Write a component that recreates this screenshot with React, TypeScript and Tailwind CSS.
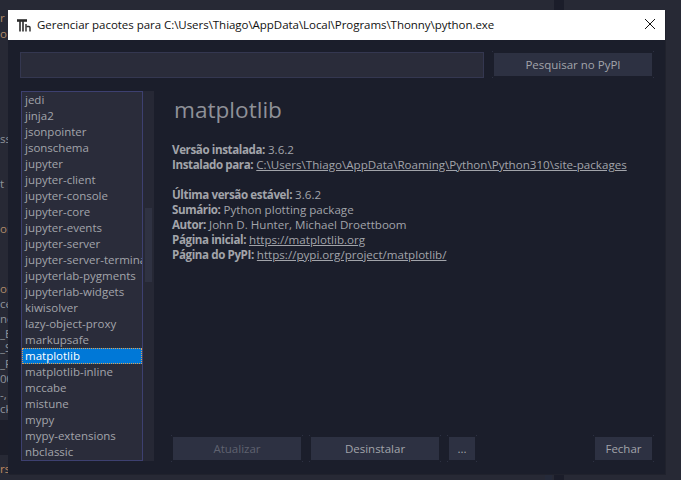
const packages = [
  'jedi',
  'jinja2',
  'jsonpointer',
  'jsonschema',
  'jupyter',
  'jupyter-client',
  'jupyter-console',
  'jupyter-core',
  'jupyter-events',
  'jupyter-server',
  'jupyter-server-terminals',
  'jupyterlab-pygments',
  'jupyterlab-widgets',
  'kiwisolver',
  'lazy-object-proxy',
  'markupsafe',
  'matplotlib',
  'matplotlib-inline',
  'mccabe',
  'mistune',
  'mypy',
  'mypy-extensions',
  'nbclassic',
];

// bits of the code editor that stick out left of the dialog
const editorFragments: [number, string, string][] = [
  [11, 'r', 'text-[#b08a68]'],
  [27, 'o', 'text-[#b08a68]'],
  [132, 'ss', 'text-[#8f939a]'],
  [177, 't', 'text-[#8f939a]'],
  [222, 'or', 'text-[#b08a68]'],
  [282, 'or', 'text-[#b08a68]'],
  [297, 'ce', 'text-[#8f939a]'],
  [312, 'no', 'text-[#8f939a]'],
  [327, '_E', 'text-[#8f939a]'],
  [341, '_S', 'text-[#8f939a]'],
  [357, '_F', 'text-[#8f939a]'],
  [372, '00', 'text-[#8f939a]'],
  [388, '-,', 'text-[#8f939a]'],
  [402, 'ck', 'text-[#8f939a]'],
  [462, 'rs', 'text-[#c08a60]'],
];

function Corner({ className }: { className: string }) {
  return <span className={`absolute h-px w-px bg-[#2d3142] ${className}`} />;
}

function DialogButton({ label, className, muted }: { label: string; className: string; muted?: boolean }) {
  return (
    <div
      className={`relative flex h-[23px] items-center justify-center bg-[#2d3142] text-[11.5px] ${muted ? 'text-[#5f6270]' : 'text-[#a2a4aa]'} ${className}`}
    >
      <Corner className="-left-[2px] -top-[2px]" />
      <Corner className="-right-[2px] -top-[2px]" />
      <Corner className="-left-[2px] -bottom-[2px]" />
      <Corner className="-right-[2px] -bottom-[2px]" />
      {label}
    </div>
  );
}

function Label({ children }: { children: string }) {
  return <span className="font-bold tracking-[-0.4px]">{children}</span>;
}

function Ext({ children }: { children: string }) {
  return <span className="underline">{children}</span>;
}

export default function App() {
  return (
    <div className="relative h-[480px] w-[681px] overflow-hidden bg-[#272935] font-['Open_Sans','Noto_Sans',sans-serif]">
      {/* editor behind the dialog */}
      <div className="absolute left-0 top-0 h-full w-[8px] overflow-hidden">
        <div className="absolute left-0 top-[420px] h-[35px] w-[8px] bg-[#1c1e2a]" />
        {editorFragments.map(([top, text, color]) => (
          <div key={top} className={`absolute left-0 whitespace-nowrap text-[11.5px] leading-[14px] ${color}`} style={{ top }}>
            {text}
          </div>
        ))}
      </div>
      <div className="absolute left-[554px] top-0 h-[10px] w-[10px] bg-[#1b1d2a]" />
      <div className="absolute left-[554px] top-[474px] h-[6px] w-[10px] bg-[#1b1d2a]" />
      <div className="absolute left-[545px] top-[474px] h-[6px] w-[7px] bg-[#252a3a]" />

      {/* dialog window */}
      <div className="absolute left-[8px] top-[10px] flex h-[464px] w-[657px] flex-col bg-[#1b1e2b] shadow-[1px_1px_0_0_#20222d]">
        <div className="flex h-[30px] shrink-0 items-center bg-white pl-[9px] pr-[10px] text-[11.5px] text-[#111]">
          <svg width="14" height="13" viewBox="0 0 14 13" className="mr-[6px] shrink-0" fill="none" stroke="#2b2b2b">
            <path d="M0 1.5h10" strokeWidth="2.6" />
            <path d="M3 2v10.5M6 2v10.5" strokeWidth="1.6" />
            <path d="M9 5v7.5" strokeWidth="1.4" />
            <path d="M9.5 7.5h2.5q1 0 1 1v4" strokeWidth="1.4" />
          </svg>
          <span className="flex-1 tracking-[-0.04px]">Gerenciar pacotes para C:\Users\Thiago\AppData\Local\Programs\Thonny\python.exe</span>
          <svg width="10" height="10" viewBox="0 0 10 10" stroke="#111" strokeWidth="1" className="-mt-[2px]">
            <path d="M0 0l10 10M10 0L0 10" />
          </svg>
        </div>

        <div className="flex flex-1 flex-col pb-[10px] pl-[12px] pr-[13px] pt-[12px]">
          <div className="flex gap-[10px]">
            <div className="h-[26px] w-[464px] border border-[#343750] bg-[#2a2c3a]" />
            <DialogButton label="Pesquisar no PyPI" className="mt-[1px] w-[158px]" />
          </div>

          <div className="mt-[13px] flex min-h-0 flex-1">
            <div className="ml-[1px] flex h-[370px] w-[133px] shrink-0 bg-[#262835]">
              <div className="h-full w-[122px] shrink-0 overflow-hidden border border-[#3d4070] bg-[#2a2c3a] text-[11.5px] text-[#a2a4aa]">
                {packages.map(name => (
                  <div
                    key={name}
                    className={`h-[16px] whitespace-nowrap pl-[3px] leading-[16px] ${name === 'matplotlib' ? 'bg-[#0078d7] text-white outline-1 -outline-offset-1 outline-dotted outline-[#e0a050]' : ''}`}
                  >
                    {name}
                  </div>
                ))}
              </div>
              <div className="ml-[2px] mt-[117px] h-[74px] w-[7px] bg-[#2f3242]" />
            </div>

            <div className="ml-[18px] flex min-w-0 flex-1 flex-col text-[11.6px] leading-[15px] text-[#a2a4aa]">
              <div className="ml-[2px] mt-[4px] text-[22.6px] leading-[30px] text-[#8f9198]">matplotlib</div>
              <div className="mt-[17px]"><Label>Versão instalada:</Label> 3.6.2</div>
              <div><Label>Instalado para:</Label> <Ext>{'C:\\Users\\Thiago\\AppData\\Roaming\\Python\\Python310\\site-packages'}</Ext></div>
              <div className="mt-[15px]"><Label>Última versão estável:</Label> 3.6.2</div>
              <div><Label>Sumário:</Label> Python plotting package</div>
              <div><Label>Autor:</Label> John D. Hunter, Michael Droettboom</div>
              <div><Label>Página inicial:</Label> <Ext>https://matplotlib.org</Ext></div>
              <div><Label>Página do PyPI:</Label> <Ext>https://pypi.org/project/matplotlib/</Ext></div>

              <div className="mt-auto flex items-center pb-[4px]">
                <DialogButton label="Atualizar" muted className="ml-[1px] w-[128px]" />
                <DialogButton label="Desinstalar" className="ml-[10px] w-[128px]" />
                <DialogButton label="..." className="ml-[10px] w-[26px]" />
                <DialogButton label="Fechar" className="ml-auto w-[57px]" />
              </div>
            </div>
          </div>
        </div>
      </div>
    </div>
  );
}
